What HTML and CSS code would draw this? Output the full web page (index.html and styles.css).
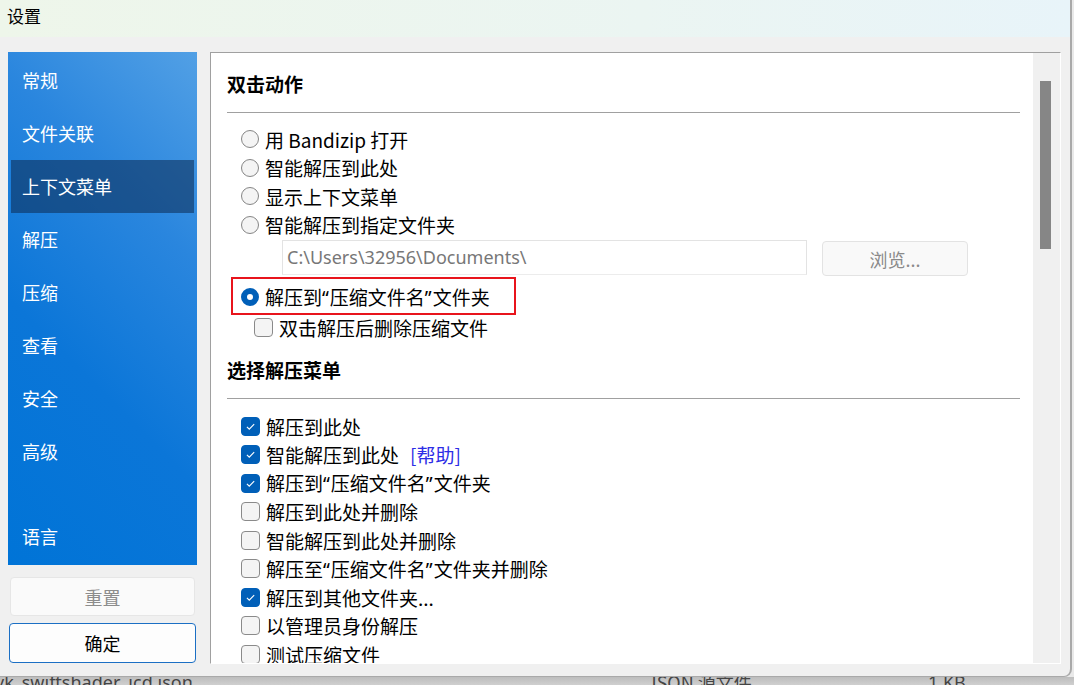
FILE: index.html
```html
<!DOCTYPE html>
<html lang="zh-CN">
<head>
  <meta charset="UTF-8" />
  <meta name="viewport" content="width=device-width, initial-scale=1.0"/>
  <title>设置</title>
  <link rel="stylesheet" href="styles.css">
</head>
<body>
  <div class="window">
    <div class="titlebar">设置</div>
    <div class="main">
      <div class="left">
        <nav class="nav">
          <div class="nav-item">常规</div>
          <div class="nav-item">文件关联</div>
          <div class="nav-item active">上下文菜单</div>
          <div class="nav-item">解压</div>
          <div class="nav-item">压缩</div>
          <div class="nav-item">查看</div>
          <div class="nav-item">安全</div>
          <div class="nav-item">高级</div>
          <div class="nav-item lang">语言</div>
        </nav>
        <button class="btn reset-btn">重置</button>
        <button class="btn ok-btn">确定</button>
      </div>

      <div class="panel">
        <div class="page">
          <h2 class="section">双击动作</h2>
          <hr class="rule">
          <div class="group">
            <label class="opt"><span class="radio"></span>用 Bandizip 打开</label>
            <label class="opt"><span class="radio"></span>智能解压到此处</label>
            <label class="opt"><span class="radio"></span>显示上下文菜单</label>
            <label class="opt"><span class="radio"></span>智能解压到指定文件夹</label>
            <div class="path-row">
              <div class="path-input">C:\Users\32956\Documents\</div>
              <button class="browse-btn">浏览...</button>
            </div>
            <label class="opt picked"><span class="radio on"></span><span>解压到<span class="q">“</span>压缩文件名<span class="q">”</span>文件夹</span></label>
            <label class="opt sub"><span class="check"></span>双击解压后删除压缩文件</label>
          </div>

          <h2 class="section second">选择解压菜单</h2>
          <hr class="rule">
          <div class="group list">
            <label class="opt"><span class="check on"><svg viewBox="0 0 18 18"><path d="M5.2 9.3l2.5 2.5 5.2-5.3"/></svg></span>解压到此处</label>
            <label class="opt"><span class="check on"><svg viewBox="0 0 18 18"><path d="M5.2 9.3l2.5 2.5 5.2-5.3"/></svg></span>智能解压到此处<a class="help">[帮助]</a></label>
            <label class="opt"><span class="check on"><svg viewBox="0 0 18 18"><path d="M5.2 9.3l2.5 2.5 5.2-5.3"/></svg></span><span>解压到<span class="q">“</span>压缩文件名<span class="q">”</span>文件夹</span></label>
            <label class="opt"><span class="check"></span>解压到此处并删除</label>
            <label class="opt"><span class="check"></span>智能解压到此处并删除</label>
            <label class="opt"><span class="check"></span><span>解压至<span class="q">“</span>压缩文件名<span class="q">”</span>文件夹并删除</span></label>
            <label class="opt"><span class="check on"><svg viewBox="0 0 18 18"><path d="M5.2 9.3l2.5 2.5 5.2-5.3"/></svg></span>解压到其他文件夹...</label>
            <label class="opt"><span class="check"></span>以管理员身份解压</label>
            <label class="opt"><span class="check"></span>测试压缩文件</label>
          </div>
        </div>
        <div class="scrollbar"><div class="thumb"></div></div>
      </div>
    </div>
  </div>

  <div class="behind">
    <div class="behind-row">
      <span class="col-name">vk_swiftshader_icd.json</span>
      <span class="col-type">JSON 源文件</span>
      <span class="col-size">1 KB</span>
    </div>
  </div>
</body>
</html>
```

FILE: styles.css
```css
body {
  margin: 0;
  background: #e9e9e9;
  font-family: "Noto Sans CJK SC", "Noto Sans", sans-serif;
  color: #000;
  overflow: hidden;
}
.window {
  width: 1070px;
  height: 676px;
  border-right: 2px solid #a9a9a9;
  border-bottom: 1px solid #a9a9a9;
  border-bottom-right-radius: 8px;
  background: #f0f0f0;
  overflow: hidden;
  position: relative;
  z-index: 1;
}
.titlebar {
  height: 37px;
  line-height: 32px;
  padding-left: 7px;
  font-size: 17px;
  background: linear-gradient(to right, #eef6ea, #ebf5f2 60%, #e8f4f9);
}
.main {
  display: flex;
  padding: 15px 0 0 8px;
}

/* left column */
.left {
  width: 189px;
  display: flex;
  flex-direction: column;
}
.nav {
  height: 513px;
  box-sizing: border-box;
  padding: 2px 3px 2px;
  display: flex;
  flex-direction: column;
  background: linear-gradient(225deg, #52a0e5 0%, #2a86de 30%, #0b76d8 62%, #0074d7 100%);
}
.nav-item {
  height: 53px;
  line-height: 52px;
  padding-left: 11px;
  font-size: 18px;
  color: #fff;
}
.nav-item.active {
  background: rgba(14, 46, 88, 0.58);
}
.nav-item.lang {
  margin-top: auto;
}
.btn {
  font-family: inherit;
  font-size: 18px;
  border-radius: 4px;
  padding: 0;
}
.reset-btn {
  margin: 12px 2px 0;
  height: 39px;
  background: #fafafa;
  border: 1px solid #e6e6e6;
  color: #8c8c8c;
}
.ok-btn {
  margin: 7px 1px 0;
  height: 40px;
  background: #fdfdfd;
  border: 1px solid #1b6fc4;
  color: #000;
}

/* right panel */
.panel {
  margin-left: 13px;
  width: 851px;
  height: 612px;
  box-sizing: border-box;
  border: 1px solid;
  border-color: #a0a0a0 #fff #fff #a0a0a0;
  display: flex;
  overflow: hidden;
}
.page {
  flex: 1;
  background: #fff;
  padding: 18px 13px 0 16px;
  overflow: hidden;
}
.scrollbar {
  width: 27px;
  flex: none;
  background: #f0f0f0;
  padding: 28px 9px 0 7px;
  box-sizing: border-box;
}
.thumb {
  height: 168px;
  background: #868686;
}
.section {
  margin: 0;
  font-size: 19px;
  line-height: 26px;
  font-weight: bold;
}
.section.second {
  margin-top: 15px;
}
.rule {
  margin: 15px 0 0;
  border: 0;
  border-top: 1px solid #a0a0a0;
  width: 793px;
}
.group {
  margin-top: 12px;
  padding-left: 14px;
}
.group.list {
  margin-top: 13px;
}
.opt {
  display: flex;
  align-items: center;
  height: 28.5px;
  gap: 6px;
  font-size: 19px;
  white-space: nowrap;
  position: relative;
}
.q {
  font-family: "Noto Sans", sans-serif;
  letter-spacing: 1px;
}
.opt.sub {
  margin-left: 13px;
  margin-top: 2px;
}
.opt.picked {
  margin-top: 7px;
}
.opt.picked::after {
  content: "";
  position: absolute;
  left: -10px;
  top: -6px;
  width: 285px;
  height: 38px;
  box-sizing: border-box;
  border: 2px solid #e8141c;
}
.radio {
  width: 18px;
  height: 18px;
  flex: none;
  box-sizing: border-box;
  border: 1px solid #858585;
  border-radius: 50%;
  background: #f4f4f4;
}
.radio.on {
  border: 6px solid #005fb8;
  background: #fff;
}
.check {
  width: 19px;
  height: 19px;
  flex: none;
  box-sizing: border-box;
  border: 1px solid #8a8a8a;
  border-radius: 4px;
  background: #f4f4f4;
}
.check.on {
  border-color: #005fb8;
  background: #005fb8;
}
.check svg {
  display: block;
  width: 17px;
  height: 17px;
  fill: none;
  stroke: #fff;
  stroke-width: 1.2;
}
.help {
  margin-left: 5px;
  color: #2d2de6;
}
.path-row {
  display: flex;
  margin: 1px 0 0 41px;
}
.path-input {
  width: 525px;
  height: 35px;
  box-sizing: border-box;
  border: 1px solid #e3e3e3;
  border-bottom-color: #ececec;
  padding-left: 4px;
  line-height: 33px;
  font-family: "Noto Sans", sans-serif;
  font-size: 18px;
  color: #777;
}
.browse-btn {
  margin: 1px 0 0 15px;
  width: 146px;
  height: 35px;
  background: #f9f9f9;
  border: 1px solid #e3e3e3;
  border-radius: 4px;
  font-family: inherit;
  font-size: 18px;
  color: #8a8a8a;
  padding: 0;
}

/* explorer list behind the dialog */
.behind {
  height: 8px;
  overflow: hidden;
  background: linear-gradient(#bdbdbd, #cfcfcf);
}
.behind-row {
  display: flex;
  margin-top: -6px;
  font-size: 18px;
  line-height: 22px;
  color: #444;
  white-space: nowrap;
}
.col-name {
  width: 652px;
  margin-left: -5px;
  font-family: "Noto Sans", sans-serif;
}
.col-type {
  width: 281px;
}
.col-size {
  font-family: "Noto Sans", sans-serif;
}
```
